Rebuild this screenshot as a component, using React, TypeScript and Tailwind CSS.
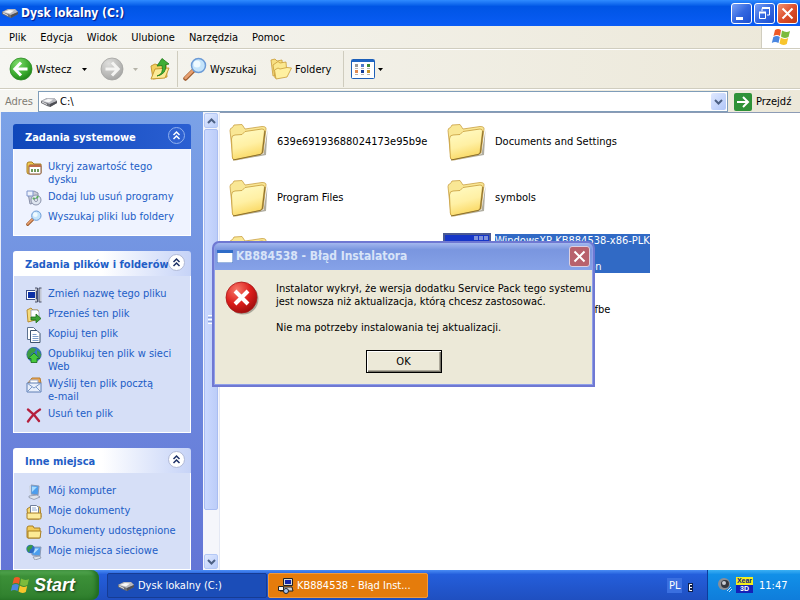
import type { ReactNode } from "react";

const ICON = "block h-4 w-4 shrink-0";

function DriveIcon() {
  return (
    <svg viewBox="0 0 16 10" className="block h-[10px] w-4 shrink-0" aria-hidden="true">
      <path d="M0 4 6 1l7 0 3 3v2l-7 4-3-1-6-3z" fill="#6f7075" />
      <path d="M0 4 6 1l7 0 3 3-7 3z" fill="#b9bac0" />
      <path d="M2 4l5-2 5 .5-4 3z" fill="#f8f8f8" />
      <path d="M9 7l7-3v2l-7 4z" fill="#4e4f55" />
      <path d="M1 5l5 2.500" stroke="#e8e8ea" />
    </svg>
  );
}

function Flag({ className }: { className: string }) {
  return (
    <svg viewBox="0 0 20 18" className={className} aria-hidden="true">
      <path d="M4 2Q7 0 10 2L9 8Q6 6 2.500 8Z" fill="#ee5a27" />
      <path d="M11 2.500Q15 5 19 3L17.500 9Q13 11 10 8.500Z" fill="#7cbb3c" />
      <path d="M2.300 9Q6 7 8.800 9L7.500 15Q4 13 .8 15Z" fill="#4a86e0" />
      <path d="M9.800 9.500Q13 12 17.200 10L15.800 16Q12 18 8.500 15.500Z" fill="#f8c52c" />
    </svg>
  );
}

function BigFolder() {
  return (
    <svg viewBox="0 0 48 48" className="block h-12 w-12 shrink-0" aria-hidden="true">
      <defs>
        <linearGradient id="bigFolder" x1="0" y1="0" x2="0.3" y2="1">
          <stop offset="0" stopColor="#fffcc8" />
          <stop offset="0.6" stopColor="#fff0a4" />
          <stop offset="1" stopColor="#fad965" />
        </linearGradient>
      </defs>
      <path d="M10 43.500 38.500 37 42.500 13 41 38 8 44z" fill="#8f8a78" opacity=".7" />
      <path d="M5 13.500Q5 11 7.500 10.500L9 8 17 7.500 20 12 37 9.500Q41.500 9.500 41 12L38 36 8 42z" fill="#f9e795" stroke="#c9a043" strokeWidth=".8" />
      <path d="M6.500 22Q6.500 18 10 18L17 17.500 20 14.500 37 12Q39.500 12 39.500 14L37 35Q37 37 35 37.500L10 43Q7.500 43 7.300 40z" fill="url(#bigFolder)" stroke="#c59b38" strokeWidth=".8" />
      <path d="M8 43 35 37.500Q37.500 37 37.500 35L40 14" fill="none" stroke="#8a7030" />
    </svg>
  );
}

function InstallerIcon() {
  return (
    <svg viewBox="0 0 48 48" className="block h-12 w-12 shrink-0" aria-hidden="true">
      <rect x="0" y="4" width="48" height="38" fill="#4a5a94" />
      <rect x="2" y="6" width="44" height="34" fill="#d8dcea" />
      <rect x="2" y="6" width="44" height="7" fill="#1636c8" />
      <rect x="31" y="7" width="4" height="4" fill="#7f92dc" />
      <rect x="36" y="7" width="4" height="4" fill="#7f92dc" />
      <rect x="41" y="7" width="4" height="4" fill="#7f92dc" />
    </svg>
  );
}

function Magnifier({ className }: { className: string }) {
  return (
    <svg viewBox="0 0 24 24" className={className} aria-hidden="true">
      <path d="M2.500 21.500 10 14" stroke="#9c5a2c" strokeWidth="4.500" strokeLinecap="round" />
      <path d="M2.500 21 9.500 14" stroke="#e8a070" strokeWidth="2.500" strokeLinecap="round" />
      <circle cx="15.500" cy="8.500" r="7" fill="#c4e4fb" stroke="#6c9bd6" strokeWidth="1.500" />
      <circle cx="14" cy="7" r="3.500" fill="#effaff" />
    </svg>
  );
}

function Arrow({ color, className }: { color: string; className?: string }) {
  return (
    <svg viewBox="0 0 5 3" className={"block h-[3px] w-[5px] shrink-0 " + (className ?? "")} aria-hidden="true">
      <path d="M0 0h5L2.500 3z" fill={color} />
    </svg>
  );
}

function RoundArrow({ back }: { back: boolean }) {
  return (
    <svg viewBox="0 0 24 24" className="block h-6 w-6 shrink-0" aria-hidden="true">
      <defs>
        <radialGradient id={back ? "goGreen" : "goGrey"} cx=".35" cy=".25" r=".9">
          <stop offset="0" stopColor={back ? "#7ddb6a" : "#dededc"} />
          <stop offset=".6" stopColor={back ? "#38a82c" : "#b8b8b6"} />
          <stop offset="1" stopColor={back ? "#14730f" : "#9c9c9b"} />
        </radialGradient>
      </defs>
      <circle cx="12" cy="12" r="11" fill={back ? "url(#goGreen)" : "url(#goGrey)"} stroke={back ? "#2d8a25" : "#a3a3a1"} strokeWidth=".8" />
      <path
        d={back ? "M12 5.500 5.800 12 12 18.500M6.500 12H18.500" : "M12 5.500 18.200 12 12 18.500M17.500 12H5.500"}
        fill="none"
        stroke={back ? "#fff" : "#f4f4f2"}
        strokeWidth="3"
      />
    </svg>
  );
}

function UpFolder() {
  return (
    <svg viewBox="0 0 22 24" className="block h-6 w-[22px] shrink-0" aria-hidden="true">
      <path d="M2 9 6 7 9 8 17 7 18 20 4 22z" fill="#f2cf5e" stroke="#c79a32" />
      <path d="M2 22 6 12 20 11 16 21z" fill="#fdeb96" stroke="#c79a32" />
      <path d="M8 19Q15 17 13 8.500L8 9 13 1.500 20 7 16.500 7.800Q18 17 8 19Z" fill="#3fae35" stroke="#1f7a1b" strokeWidth=".8" />
    </svg>
  );
}

function FoldersIcon() {
  return (
    <svg viewBox="0 0 24 22" className="block h-[22px] w-6 shrink-0" aria-hidden="true">
      <path d="M2 2 6 1 8 3 13 2 14 16 4 18z" fill="#f7df82" stroke="#c99c36" strokeWidth=".8" />
      <path d="M4 7 9 3.500 11 5 17 4 18 17 6 20z" fill="#fbe88f" stroke="#c99c36" strokeWidth=".8" />
      <path d="M7 21 5.500 12 9 10 11 11 18 9.500 22.500 10 18 19z" fill="#fff0a0" stroke="#c99c36" strokeWidth=".8" />
    </svg>
  );
}

function ViewsIcon() {
  const cells = ["#9a9a9a", "#4c78c8", "#3d8a35", "#e08a50", "#143f9c", "#c7952c"];
  return (
    <svg viewBox="0 0 24 20" className="block h-5 w-6 shrink-0" aria-hidden="true">
      <rect x=".5" y=".5" width="23" height="19" rx="1" fill="#fff" stroke="#1c5fb8" />
      <rect x="1" y="1" width="22" height="2" fill="#1f66c4" />
      {cells.map((c, i) => (
        <g key={c}>
          <rect x={4 + (i % 3) * 6} y={i < 3 ? 5 : 11} width="3" height="3" fill={c} />
          <rect x={4 + (i % 3) * 6} y={i < 3 ? 9 : 15} width="3" height="1" fill="#b4b4b4" />
        </g>
      ))}
    </svg>
  );
}

const taskIcons: Record<string, ReactNode> = {
  hide: (
    <>
      <path d="M1 4Q1 2 3 2H6L8 4H15V13Q15 14 13 14H3Q1 14 1 12Z" fill="#f2c94e" stroke="#a87e24" />
      <rect x="3" y="5" width="12" height="9" rx="1" fill="#fff" stroke="#8a5a44" />
      <rect x="3" y="5" width="12" height="2" fill="#bf6b4a" />
      <path d="M5 9h2v3H5zM8 9h2v3H8zM11 9h2v3h-2z" fill="#6f9a5a" />
    </>
  ),
  add: (
    <>
      <path d="M2 3 8 1l4 2v9l-8 2z" fill="#c9cbd8" stroke="#8890a8" />
      <path d="M1 1h6v5H1z" fill="#eef2fb" stroke="#7f95cc" />
      <circle cx="10" cy="10" r="5" fill="#dfe6f0" stroke="#8b93ab" />
      <path d="M7 8q3 3 5-2" fill="none" stroke="#5bb05a" strokeWidth="2" />
      <circle cx="10" cy="10" r="1.500" fill="#fff" stroke="#8b93ab" />
    </>
  ),
  rename: (
    <>
      <rect x=".5" y="3.500" width="11" height="9" fill="#fff" stroke="#3c4f87" />
      <rect x="2" y="5" width="8" height="6" fill="#0b2fa6" />
      <path d="M9 1h2.500v3h-1v8h1v3H9M15.500 1H13v14h2.500" fill="#c4c8d4" stroke="#4a5068" />
    </>
  ),
  move: (
    <>
      <path d="M1 3 5 1l2 2h5l1 9-11 3z" fill="#f6dc7c" stroke="#b98d31" />
      <path d="M5 3h6l2 2v6H5z" fill="#fff" stroke="#8a94b0" strokeWidth=".7" />
      <path d="M5 10h5V7l5 4.500-5 4.300V13H5z" fill="#3ea136" stroke="#196c17" strokeWidth=".8" />
    </>
  ),
  copy: (
    <>
      <path d="M1.500 .5h6l3 3v9h-9z" fill="#fff" stroke="#5c7290" />
      <path d="M4.500 3.500h6.500l3 3v9H4.500z" fill="#fff" stroke="#3d536f" />
      <path d="M6.500 7.500h4M6.500 9.500h6M6.500 11.500h6M6.500 13.500h6" stroke="#7e9fcb" />
    </>
  ),
  web: (
    <>
      <circle cx="8" cy="7.500" r="7.200" fill="#3576c8" stroke="#24538f" strokeWidth=".6" />
      <path d="M1 8Q1 3 6 .8L10 2Q9 6 6 6Q4 9 3 12Q1 10 1 8Z" fill="#3c9c44" />
      <path d="M11 3Q15 5 15 9Q13 12 11 7Z" fill="#3c9c44" />
      <path d="M8 6 14 11.500H11V15.500H5v-4H2z" fill="#46c83c" stroke="#146b16" strokeWidth=".8" />
    </>
  ),
  mail: (
    <>
      <path d="M2 6 6 1h8l1 5z" fill="#f0a850" stroke="#b57a2e" />
      <path d="M4 3h8v6H4z" fill="#fff" stroke="#9aa6c4" />
      <path d="M1 6h14v9H1z" fill="#e8effc" stroke="#5f7fb4" />
      <path d="M1 6l7 5 7-5M1 15l5-5M15 15l-5-5" fill="none" stroke="#7c99c8" />
    </>
  ),
  del: <path d="M2 2.500Q8 7 13 14M14 2.500Q7 7 2 14.500" fill="none" stroke="#b51f3c" strokeWidth="2.300" strokeLinecap="round" />,
  computer: (
    <>
      <path d="M5 1 13 2 12 11 5 10z" fill="#4c9eee" stroke="#8d9bb5" />
      <path d="M3 2 5 1v9L4 11z" fill="#cdd5e2" />
      <path d="M6 2.500l5 .5-5 5z" fill="#a8dcff" />
      <path d="M3 12l8-1 3 2-6 2.500-5-2z" fill="#dfe3ea" stroke="#7f8aa0" strokeWidth=".7" />
    </>
  ),
  docs: (
    <>
      <path d="M1 5 4 3h10l1 10-2 2H2z" fill="#f6d974" stroke="#a87e24" />
      <path d="M4.500 1.500h6l2 2V11h-8z" fill="#fff" stroke="#6f7f9c" />
      <path d="M6 4h4M6 6h5" stroke="#8fa9d2" />
      <path d="M1 9h14v5q0 1-1 1H2q-1 0-1-1z" fill="#fdeb9c" stroke="#a87e24" />
    </>
  ),
  shared: (
    <>
      <path d="M1 4q0-2 2-2h4l1 2h6v9q0 1-1 1H2q-1 0-1-1z" fill="#f2cb58" stroke="#a87e24" />
      <path d="M2 7h13l-1 7H2z" fill="#fdea95" stroke="#a87e24" />
    </>
  ),
  network: (
    <>
      <path d="M5 3l10 0-1 9-8-1z" fill="#4c9eee" stroke="#8d9bb5" />
      <path d="M7 4.500h6l-5 5z" fill="#b4e0ff" />
      <path d="M7 13l7-1 1 2-6 2z" fill="#dfe3ea" stroke="#7f8aa0" strokeWidth=".7" />
      <circle cx="4.500" cy="5" r="4.200" fill="#2f6cc4" />
      <path d="M.8 4q3-4 6-2.500-1 4-3 4 0 4-2 2z" fill="#3c9c44" />
    </>
  ),
};

type Task = { icon: string; label: string };

function Chevrons({ primary }: { primary: boolean }) {
  return (
    <svg viewBox="0 0 19 19" className="block h-[19px] w-[19px]" aria-hidden="true">
      <circle cx="9.500" cy="9.500" r="8" fill={primary ? "#2f62d2" : "#fff"} stroke={primary ? "#8fb0ee" : "#b0b9d6"} />
      <path d="M6.500 9 9.500 6l3 3M6.500 13l3-3 3 3" fill="none" stroke={primary ? "#fff" : "#1e3166"} strokeWidth="1.500" />
    </svg>
  );
}

function Panel({ title, tasks, primary = false }: { title: string; tasks: Task[]; primary?: boolean }) {
  return (
    <section className="shrink-0">
      <h2
        className={
          "flex h-[25px] items-start justify-between rounded-t-[3px] pt-[2px] pl-3 pr-[5px] font-bold " +
          (primary
            ? "bg-linear-to-r from-[#0f47ba] to-[#2a5fd2] text-white"
            : "bg-linear-to-r from-white from-50% to-[#c6d3f7] text-[#215dc6]")
        }
      >
        <span className="pt-[5px] whitespace-nowrap">{title}</span>
        <button type="button" aria-label={"Zwiń: " + title} className="-ml-2 shrink-0">
          <Chevrons primary={primary} />
        </button>
      </h2>
      <ul
        className={
          "flex flex-col gap-1 border border-t-0 border-white pt-[11px] pr-2 pb-[9px] pl-3 " +
          (primary ? "bg-[#eff3ff]" : "bg-[#d6dff7]")
        }
      >
        {tasks.map((t) => (
          <li key={t.label}>
            <a href="#" className="flex min-h-4 items-start gap-[6px] text-[#215dc6]">
              {t.icon === "search" ? (
                <Magnifier className={ICON} />
              ) : (
                <svg viewBox="0 0 16 16" className={ICON} aria-hidden="true">
                  {taskIcons[t.icon]}
                </svg>
              )}
              <span className="whitespace-pre-line">{t.label}</span>
            </a>
          </li>
        ))}
      </ul>
    </section>
  );
}

function ScrollButton({ up }: { up: boolean }) {
  return (
    <button
      type="button"
      aria-label={up ? "Przewiń w górę" : "Przewiń w dół"}
      className="m-px flex h-[15px] shrink-0 items-center justify-center rounded-[2px] border border-[#b4c8f6] bg-linear-to-br from-[#e0e9ff] to-[#b9ccf9]"
    >
      <svg viewBox="0 0 9 6" className="h-[6px] w-[9px]" aria-hidden="true">
        <path d={up ? "M1 5 4.500 1.500 8 5" : "M1 1 4.500 4.500 8 1"} fill="none" stroke="#4d6185" strokeWidth="2" />
      </svg>
    </button>
  );
}

function CaptionButton({ kind, label }: { kind: "min" | "restore" | "close"; label: string }) {
  return (
    <button
      type="button"
      aria-label={label}
      className={
        "h-[21px] w-[21px] rounded-[3px] border border-white " +
        (kind === "close" ? "bg-linear-to-br from-[#f0906f] via-[#dd4f2c] to-[#c23a12]" : "bg-linear-to-br from-[#7aa0f5] via-[#3468e0] to-[#1c4fd0]")
      }
    >
      <svg viewBox="0 0 19 19" className="block h-[19px] w-[19px]" fill="none" stroke="#fff" aria-hidden="true">
        {kind === "min" && <path d="M4 14.500h7" strokeWidth="3" />}
        {kind === "restore" && (
          <>
            <path d="M7 7V4.500h7.500V11H12" />
            <path d="M7 4h8" strokeWidth="2" />
            <path d="M4.500 8.500h6v6h-6z" />
            <path d="M4 8.500h7" strokeWidth="2" />
          </>
        )}
        {kind === "close" && <path d="M4.500 4.500l10 10M14.500 4.500l-10 10" strokeWidth="2" />}
      </svg>
    </button>
  );
}

const menu = ["Plik", "Edycja", "Widok", "Ulubione", "Narzędzia", "Pomoc"];

const systemTasks: Task[] = [
  { icon: "hide", label: "Ukryj zawartość tego\ndysku" },
  { icon: "add", label: "Dodaj lub usuń programy" },
  { icon: "search", label: "Wyszukaj pliki lub foldery" },
];
const fileTasks: Task[] = [
  { icon: "rename", label: "Zmień nazwę tego pliku" },
  { icon: "move", label: "Przenieś ten plik" },
  { icon: "copy", label: "Kopiuj ten plik" },
  { icon: "web", label: "Opublikuj ten plik w sieci\nWeb" },
  { icon: "mail", label: "Wyślij ten plik pocztą\ne-mail" },
  { icon: "del", label: "Usuń ten plik" },
];
const places: Task[] = [
  { icon: "computer", label: "Mój komputer" },
  { icon: "docs", label: "Moje dokumenty" },
  { icon: "shared", label: "Dokumenty udostępnione" },
  { icon: "network", label: "Moje miejsca sieciowe" },
];

type Entry = { kind: "folder" | "installer"; name: string };

const files: Entry[] = [
  { kind: "folder", name: "639e69193688024173e95b9e" },
  { kind: "folder", name: "Documents and Settings" },
  { kind: "folder", name: "Program Files" },
  { kind: "folder", name: "symbols" },
  { kind: "folder", name: "" },
  { kind: "installer", name: "WindowsXP-KB884538-x86-PLK" },
  { kind: "folder", name: "" },
  { kind: "folder", name: "3c02b7d41e96058afbe" },
];

export default function App() {
  return (
    <div className="flex h-screen flex-col overflow-hidden bg-[#ece9d8] font-['DejaVu_Sans_Condensed','DejaVu_Sans',sans-serif] text-[11px] leading-[13px] text-black">
      <header className="flex h-[26px] shrink-0 items-center gap-[3px] bg-linear-to-b from-[#2f8bff] via-[#0055e5] via-25% to-[#0a5cf5] pr-[2px] pl-[2px]">
        <DriveIcon />
        <h1 className="flex-1 text-[12px] font-bold text-white [text-shadow:1px_1px_1px_#0a1883]">Dysk lokalny (C:)</h1>
        <div className="flex gap-[2px]">
          <CaptionButton kind="min" label="Minimalizuj" />
          <CaptionButton kind="restore" label="Przywróć" />
          <CaptionButton kind="close" label="Zamknij" />
        </div>
      </header>

      <nav className="flex h-[23px] shrink-0 border-b border-[#d0cdbf] bg-linear-to-r from-[#f6f6f2] to-[#ece8d9]">
        <div className="flex flex-1 items-center gap-[14px] pl-[9px]">
          {menu.map((m) => (
            <button key={m} type="button">
              {m}
            </button>
          ))}
        </div>
        <div className="flex w-[39px] items-center justify-center border-l border-[#d0cdbf] bg-white">
          <Flag className="h-[18px] w-5" />
        </div>
      </nav>

      <div className="flex h-10 shrink-0 items-center border-t border-b border-t-white border-b-[#d0cdbf] bg-linear-to-r from-[#f6f6f2] to-[#ece8d9] pl-[9px]">
        <button type="button" className="flex w-[84px] items-center gap-[3px]">
          <RoundArrow back />
          Wstecz
          <Arrow color="#000" className="ml-auto mr-[6px]" />
        </button>
        <button type="button" aria-label="Dalej" className="ml-[7px] flex items-center gap-[9px]">
          <RoundArrow back={false} />
          <Arrow color="#b5b3a8" />
        </button>
        <button type="button" aria-label="W górę" className="ml-[11px]">
          <UpFolder />
        </button>
        <div className="mr-[5px] ml-[6px] h-9 w-px bg-[#cfccbe]" />
        <button type="button" className="flex w-[86px] items-center gap-[3px]">
          <Magnifier className="block h-6 w-6 shrink-0" />
          Wyszukaj
        </button>
        <button type="button" className="flex w-[66px] items-center gap-[2px]">
          <FoldersIcon />
          Foldery
        </button>
        <div className="mr-[7px] ml-[8px] h-9 w-px bg-[#cfccbe]" />
        <button type="button" aria-label="Widoki" className="flex items-center gap-[3px]">
          <ViewsIcon />
          <Arrow color="#000" />
        </button>
      </div>

      <div className="flex h-[23px] shrink-0 items-center border-t border-white bg-linear-to-r from-[#f6f6f2] to-[#ece8d9] pt-px">
        <label htmlFor="address" className="w-[38px] pl-[5px] text-[#7f7c73]">
          Adres
        </label>
        <div className="flex h-[21px] flex-1 items-center gap-[3px] border border-[#7f9db9] bg-white pr-px pl-[2px]">
          <DriveIcon />
          <input id="address" defaultValue="C:\" className="min-w-0 flex-1 bg-transparent outline-none" />
          <button
            type="button"
            aria-label="Rozwiń"
            className="flex h-[17px] w-[15px] items-center justify-center rounded-[2px] bg-linear-to-br from-[#e0e9ff] to-[#b0c6f8]"
          >
            <svg viewBox="0 0 9 6" className="h-[6px] w-[9px]" aria-hidden="true">
              <path d="M1 1 4.500 4.500 8 1" fill="none" stroke="#4d6185" strokeWidth="2" />
            </svg>
          </button>
        </div>
        <button type="button" className="flex w-[72px] items-center gap-1 pl-[6px]">
          <svg viewBox="0 0 18 18" className="h-[18px] w-[18px] shrink-0" aria-hidden="true">
            <rect width="18" height="18" rx="2" fill="#2f9238" />
            <path d="M3 9h11M9 4l5 5-5 5" fill="none" stroke="#fff" strokeWidth="2" />
          </svg>
          Przejdź
        </button>
      </div>

      <main className="flex min-h-0 flex-1">
        <aside className="flex w-[203px] shrink-0 flex-col gap-[15px] overflow-hidden border-l border-[#e8ecf8] bg-linear-to-b from-[#7ba2e7] to-[#6375d6] px-3 pt-3">
          <Panel title="Zadania systemowe" tasks={systemTasks} primary />
          <Panel title="Zadania plików i folderów" tasks={fileTasks} />
          <Panel title="Inne miejsca" tasks={places} />
        </aside>
        <div className="flex w-[17px] shrink-0 flex-col border-r border-[#e4e8f4] bg-[#f5f6fb]">
          <ScrollButton up />
          <div className="mx-px flex h-[381px] flex-col items-center justify-center gap-px rounded-[2px] border border-[#a9bdf2] bg-linear-to-r from-[#cbd9ff] to-[#bccdf8]">
            <i className="block h-px w-[6px] bg-white" />
            <i className="block h-px w-[6px] bg-[#8ea6e0]" />
            <i className="block h-px w-[6px] bg-white" />
            <i className="block h-px w-[6px] bg-[#8ea6e0]" />
            <i className="block h-px w-[6px] bg-white" />
          </div>
          <div className="flex-1" />
          <ScrollButton up={false} />
        </div>
        <ul className="grid min-w-0 flex-1 auto-rows-[48px] grid-cols-[repeat(2,218px)] gap-y-2 overflow-hidden border-t border-[#8c9bb5] bg-white pt-1 pl-[5px]">
          {files.map((f, i) => (
            <li key={i} className="flex items-center gap-1">
              {f.kind === "installer" ? <InstallerIcon /> : <BigFolder />}
              {f.kind === "installer" ? (
                <div className="whitespace-nowrap bg-[#316ac5] text-white">
                  <p>{f.name}</p>
                  <p>Installer</p>
                  <p>Microsoft Corporation</p>
                </div>
              ) : (
                <span className="whitespace-nowrap">{f.name}</span>
              )}
            </li>
          ))}
        </ul>
      </main>

      <footer className="flex h-[30px] shrink-0 items-stretch bg-linear-to-b from-[#4a8cf4] via-[#245edb] via-15% to-[#1f4fc0]">
        <button
          type="button"
          className="flex w-[99px] items-center gap-1 rounded-r-[8px] bg-linear-to-b from-[#5fb45c] via-[#3c9038] via-20% to-[#2f7f2d] pl-[10px] font-['Liberation_Sans',sans-serif] text-[18px] leading-[22px] font-bold text-white italic shadow-[inset_-3px_0_4px_#1f6a20] [text-shadow:1px_1px_2px_#1a3f18]"
        >
          <Flag className="h-[18px] w-5 shrink-0" />
          Start
        </button>
        <div className="flex flex-1 gap-px pt-[3px] pb-[2px] pl-2 text-white">
          <button
            type="button"
            className="flex w-[160px] items-center gap-1 rounded-[2px] border border-[#163c94] bg-[#1b4db8] pl-[10px]"
          >
            <DriveIcon />
            Dysk lokalny (C:)
          </button>
          <button
            type="button"
            className="flex w-[160px] items-center gap-[3px] rounded-[2px] border border-[#f09a3c] bg-[#e57c0c] pl-[9px]"
          >
            <svg viewBox="0 0 16 16" className={ICON} aria-hidden="true">
              <path d="M5.500 .5h9v7h-9z" fill="#d8d8d8" stroke="#222" />
              <path d="M7 2h6v4H7z" fill="#1224a8" />
              <path d="M3 9h11l1 4H2z" fill="#cfcfcf" stroke="#222" />
              <path d="M.5 8.500h5v4h-5z" fill="#f4f4f4" stroke="#222" />
              <circle cx="8" cy="13" r="2.500" fill="#a8c4f0" stroke="#222" />
            </svg>
            <span className="truncate">KB884538 - Błąd Inst...</span>
          </button>
        </div>
        <div className="flex w-10 items-center gap-[6px] text-white">
          <span className="bg-[#3a6fe0] px-[2px] py-px">PL</span>
          <svg viewBox="0 0 5 9" className="mt-1 h-[9px] w-[5px]" aria-hidden="true">
            <path d="M0 0h5v9H0z" fill="#10204c" />
            <path d="M4 1.500H1.500v6H4M1.500 4.500H4" fill="none" stroke="#fff" />
          </svg>
        </div>
        <div className="flex w-[93px] items-center gap-1 border-l border-[#0c3c9c] bg-linear-to-b from-[#3ab0f4] via-[#1290e8] via-15% to-[#0f7ddb] pl-[10px] text-white">
          <svg viewBox="0 0 14 16" className="h-4 w-[14px] shrink-0" aria-hidden="true">
            <circle cx="6" cy="7" r="6" fill="#8b8f96" />
            <circle cx="7" cy="7" r="4" fill="#33373f" />
            <circle cx="6" cy="6" r="2" fill="#c9cdd4" />
            <path d="M9 14l4-4M11 15l3-3" stroke="#bfe0ff" />
          </svg>
          <span className="flex w-[17px] shrink-0 flex-col text-center font-['Liberation_Sans',sans-serif] text-[7px] leading-[8px] font-bold">
            <span className="bg-[#f4ee1c] text-[#111a80]">Xear</span>
            <span className="bg-[#1420b8] text-white">3D</span>
          </span>
          <time className="pl-[2px]">11:47</time>
        </div>
      </footer>

      <div
        role="dialog"
        aria-labelledby="dialog-title"
        className="absolute top-[241px] left-[212px] w-[383px] rounded-t-[7px] border-2 border-[#6f78d2] bg-[#7a96df] p-px pt-0 shadow-[inset_0_0_0_1px_#8f9fe8]"
      >
        <div className="flex h-[27px] items-center gap-[3px] rounded-t-[5px] bg-linear-to-b from-[#a4b8ee] via-[#7a96df] via-25% to-[#86a2e8] pr-[2px] pl-[2px]">
          <svg viewBox="0 0 16 13" className="h-[13px] w-4" aria-hidden="true">
            <rect width="16" height="13" fill="#fff" stroke="#3a6fc0" />
            <rect width="16" height="3" fill="#2f6cc8" />
          </svg>
          <h2 id="dialog-title" className="flex-1 text-[12px] font-bold text-[#d8e4f8]">
            KB884538 - Błąd Instalatora
          </h2>
          <button type="button" aria-label="Zamknij" className="h-[21px] w-[21px] rounded-[3px] border border-[#dcd0e0] bg-[#b8616c]">
            <svg viewBox="0 0 19 19" className="block h-[19px] w-[19px]" aria-hidden="true">
              <path d="M4.500 4.500l10 10M14.500 4.500l-10 10" stroke="#fff" strokeWidth="2" />
            </svg>
          </button>
        </div>
        <div className="bg-[#ece9d8] pt-[11px] pb-[11px]">
          <div className="flex gap-[17px] pl-[10px]">
            <svg viewBox="0 0 34 34" className="h-[34px] w-[34px] shrink-0" aria-hidden="true">
              <defs>
                <radialGradient id="stop" cx=".35" cy=".25" r=".9">
                  <stop offset="0" stopColor="#f77a6a" />
                  <stop offset=".5" stopColor="#dc1f1c" />
                  <stop offset="1" stopColor="#8a0808" />
                </radialGradient>
              </defs>
              <circle cx="18" cy="18" r="15.500" fill="#8f8b80" opacity=".7" />
              <circle cx="16.500" cy="16.500" r="15.500" fill="url(#stop)" stroke="#a81616" strokeWidth=".8" />
              <path d="M10 10l13 13M23 10 10 23" stroke="#fff" strokeWidth="4" />
            </svg>
            <div className="pt-px whitespace-nowrap">
              <p>Instalator wykrył, że wersja dodatku Service Pack tego systemu</p>
              <p>jest nowsza niż aktualizacja, którą chcesz zastosować.</p>
              <p className="mt-[13px]">Nie ma potrzeby instalowania tej aktualizacji.</p>
            </div>
          </div>
          <div className="mt-4 flex justify-center">
            <button
              type="button"
              className="h-[23px] w-[76px] border border-black bg-[#ece9d8] shadow-[inset_1px_1px_0_#fff,inset_-1px_-1px_0_#716f64,inset_-2px_-2px_0_#aca899]"
            >
              OK
            </button>
          </div>
        </div>
      </div>
    </div>
  );
}
